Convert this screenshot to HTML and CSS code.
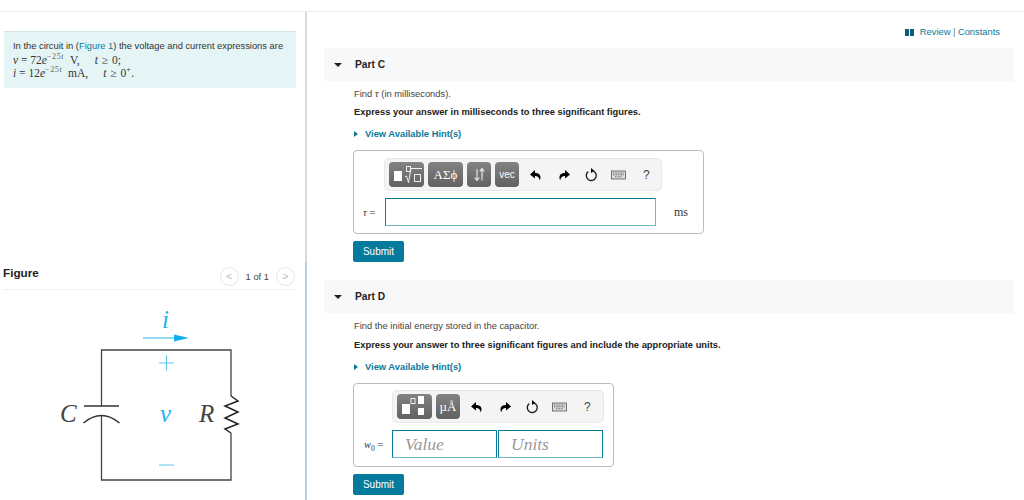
FILE: index.html
```html
<!DOCTYPE html>
<html lang="en">
<head>
  <meta charset="UTF-8" />
  <title>Part C and Part D</title>
  <link rel="stylesheet" href="styles.css">
</head>
<body>
  <svg class="defs" width="0" height="0">
    <symbol id="undo" viewBox="0 0 14 14"><path d="M6 2 L1 6.5 L6 10.5 V8 C8.5 8 10 9 10.8 12.5 C12.8 7.5 10.5 5 6 5 Z"/></symbol>
    <symbol id="redo" viewBox="0 0 14 14"><path d="M8 2 L13 6.5 L8 10.5 V8 C5.5 8 4 9 3.2 12.5 C1.2 7.5 3.5 5 8 5 Z"/></symbol>
    <symbol id="reset" viewBox="0 0 14 14"><path d="M4.2 3.6 A5 5 0 1 0 8 2.6" fill="none" stroke="#222" stroke-width="1.4"/><path d="M7 0 L10.2 2.7 L7 5 Z"/></symbol>
    <symbol id="keys" viewBox="0 0 15 10"><rect x="0.5" y="1" width="14" height="8" fill="#ddd" stroke="#555" stroke-width="0.8"/><path d="M2 3 H13 M2 4.8 H13 M4 6.8 H11" stroke="#666" stroke-width="1" stroke-dasharray="1 .6"/></symbol>
  </svg>

  <div class="main">
    <div class="left">
      <div class="intro">
        <div class="note">
          <div>In the circuit in (<a>Figure 1</a>) the voltage and current expressions are</div>
          <div class="math"><i>v</i> = 72<i>e</i><sup>&minus;25<i>t</i></sup> <span class="after-exp">V,</span><span class="gap"><i>t</i> &ge; 0;</span></div>
          <div class="math"><i>i</i> = 12<i>e</i><sup>&minus;25<i>t</i></sup> <span class="after-exp">mA,</span><span class="gap"><i>t</i> &ge; 0<sup class="plus">+</sup>.</span></div>
        </div>
      </div>
      <div class="figure">
        <div class="figure-head">
          <span class="figure-title">Figure</span>
          <div class="pager">
            <span class="page-btn">&lt;</span>
            <span class="page-count">1 of 1</span>
            <span class="page-btn">&gt;</span>
          </div>
        </div>
        <svg class="circuit" width="300" height="210" viewBox="0 0 300 210">
          <path d="M101.5 116 V60 H231 V106 M231 143 V190 H101.5 V126" fill="none" stroke="#444" stroke-width="1.3"/>
          <path d="M84 116 H119" stroke="#333" stroke-width="1.5"/>
          <path d="M83.5 133 Q101.5 118 119.5 133" fill="none" stroke="#333" stroke-width="1.5"/>
          <path d="M231 106 L238 111 L225 116 L238 122 L225 128 L238 134 L225 139 L231 143" fill="none" stroke="#222" stroke-width="1.5"/>
          <text class="letter dark" x="60" y="132">C</text>
          <text class="letter dark" x="199" y="132">R</text>
          <text class="letter cyan" x="160" y="132">v</text>
          <text class="letter cyan" x="162" y="38">i</text>
          <path d="M143 48 H176" stroke="#2bb6ec" stroke-width="1.2"/>
          <path d="M174 44.5 L189 48 L174 51.5 Z" fill="#12aeea"/>
          <path d="M159 73 H174 M166.5 65.5 V80.5 M159 175 H174" stroke="#5cc6ef" stroke-width="1.2"/>
        </svg>
      </div>
    </div>

    <div class="right">
      <div class="review">
        <span class="book"></span>
        <a>Review</a> <span class="sep">|</span> <a>Constants</a>
      </div>

      <div class="part-bar"><span class="caret"></span>Part C</div>
      <div class="part-body part-body-c">
        <p>Find <i class="serif">&tau;</i> (in milliseconds).</p>
        <p class="strong">Express your answer in milliseconds to three significant figures.</p>
        <p class="hint"><span class="hint-caret"></span>View Available Hint(s)</p>
        <div class="answer answer-c">
          <div class="toolbar">
            <span class="btn btn-wide">
              <svg width="35" height="25">
                <rect x="5" y="9" width="8" height="10" fill="#fff"/>
                <rect x="17.5" y="4.5" width="4" height="5" fill="none" stroke="#eee"/>
                <path d="M16 14.5 L17.5 14 L19.5 20.5 L22 6.5 H33" fill="none" stroke="#eee"/>
                <rect x="25.5" y="12.5" width="6" height="7" fill="none" stroke="#eee"/>
              </svg>
            </span>
            <span class="btn btn-sym">&Alpha;&Sigma;&#981;</span>
            <span class="btn btn-small">
              <svg width="24" height="25">
                <path d="M10 7 V18 M7.5 15.5 L10 18.5 L12.5 15.5 M15 18.5 V7 M12.8 9.5 L15 6.5 L17.2 9.5" fill="none" stroke="#eee" stroke-width="1.1"/>
              </svg>
            </span>
            <span class="btn btn-small vec">vec</span>
            <span class="tool first"><svg width="14" height="14"><use href="#undo"/></svg></span>
            <span class="tool"><svg width="14" height="14"><use href="#redo"/></svg></span>
            <span class="tool"><svg width="14" height="14"><use href="#reset"/></svg></span>
            <span class="tool"><svg width="15" height="10"><use href="#keys"/></svg></span>
            <span class="tool help">?</span>
          </div>
          <div class="row">
            <span class="var var-c"><i>&tau;</i> =</span>
            <span class="field field-c"></span>
            <span class="unit">ms</span>
          </div>
        </div>
        <div class="submit">Submit</div>
      </div>

      <div class="part-bar part-d"><span class="caret"></span>Part D</div>
      <div class="part-body part-body-d">
        <p>Find the initial energy stored in the capacitor.</p>
        <p class="strong">Express your answer to three significant figures and include the appropriate units.</p>
        <p class="hint"><span class="hint-caret"></span>View Available Hint(s)</p>
        <div class="answer answer-d">
          <div class="toolbar">
            <span class="btn btn-wide">
              <svg width="35" height="25">
                <rect x="5" y="10" width="8" height="10" fill="#fff"/>
                <rect x="14" y="4.5" width="4" height="5" fill="none" stroke="#eee"/>
                <rect x="21" y="2" width="6" height="8" fill="#fff"/>
                <rect x="21" y="14" width="6" height="7" fill="#fff"/>
              </svg>
            </span>
            <span class="btn btn-small units">&micro;&#8491;</span>
            <span class="tool first"><svg width="14" height="14"><use href="#undo"/></svg></span>
            <span class="tool"><svg width="14" height="14"><use href="#redo"/></svg></span>
            <span class="tool"><svg width="14" height="14"><use href="#reset"/></svg></span>
            <span class="tool"><svg width="15" height="10"><use href="#keys"/></svg></span>
            <span class="tool help">?</span>
          </div>
          <div class="row">
            <span class="var var-d"><i>w</i><sub>0</sub> =</span>
            <span class="field field-d">Value</span>
            <span class="field field-d">Units</span>
          </div>
        </div>
        <div class="submit submit-d">Submit</div>
      </div>
    </div>
  </div>
</body>
</html>
```

FILE: styles.css
```css
html, body {
  height: 500px;
  overflow: hidden;
}
body {
  margin: 0;
  padding-top: 11px;
  box-sizing: border-box;
  background: #fff;
  color: #333;
  font-family: "Liberation Sans", Arial, sans-serif;
  font-size: 9.35px;
}
.defs {
  position: absolute;
}
.main {
  display: flex;
  height: 489px;
  border-top: 1px solid #eee;
}

/* left column */
.left {
  width: 307px;
  flex: none;
  box-sizing: border-box;
}
.intro {
  height: 250px;
  padding-top: 19px;
  box-sizing: border-box;
  border-right: 2px solid #d5dade;
}
.note {
  width: 292px;
  height: 57px;
  margin-left: 4px;
  padding: 8px 0 0 9px;
  box-sizing: border-box;
  background: #e5f5f5;
  border-top: 1px solid #d5e4e6;
  line-height: 13.5px;
}
.note a {
  color: #0a7a9b;
}
.math {
  font-family: "Liberation Serif", serif;
  font-size: 11.5px;
  line-height: 13px;
  color: #333;
}
.math sup {
  font-size: 8px;
  line-height: 0;
  letter-spacing: 0.6px;
  color: #666;
}
.math sup.plus {
  color: #333;
}
.after-exp {
  margin-left: 3px;
}
.gap {
  margin-left: 15px;
  word-spacing: 1px;
}
.figure {
  height: 239px;
  border-right: 2px solid #b9d0e4;
}
.figure-head {
  display: flex;
  justify-content: space-between;
  align-items: center;
  height: 28px;
  margin: 0 10px 0 3px;
  border-bottom: 1px solid #f0f0f0;
  box-sizing: border-box;
}
.figure-title {
  margin-top: -6px;
  font-size: 11.7px;
  font-weight: bold;
  color: #222;
}
.pager {
  display: flex;
  align-items: center;
  gap: 7px;
  margin-top: 2px;
}
.page-btn {
  display: flex;
  align-items: center;
  justify-content: center;
  width: 17px;
  height: 17px;
  border: 1px solid #e6e6e6;
  border-radius: 50%;
  color: #bbb;
  font-size: 10px;
}
.page-count {
  color: #444;
}
.circuit {
  display: block;
}
.letter {
  font-family: "Liberation Serif", serif;
  font-style: italic;
  font-size: 25px;
}
.dark {
  fill: #444;
}
.cyan {
  fill: #20b2ea;
}

/* right column */
.right {
  flex: 1;
  min-width: 0;
}
.review {
  display: flex;
  justify-content: flex-end;
  align-items: center;
  gap: 2.5px;
  height: 12px;
  padding: 14px 24px 0 0;
  margin-bottom: 10px;
  color: #0a7a9b;
}
.book {
  width: 9px;
  height: 7px;
  margin-right: 3px;
  background: linear-gradient(90deg, #0b5f7d 45%, #fff 45%, #fff 55%, #0b5f7d 55%);
}
.sep {
  color: #777;
}
.part-bar {
  display: flex;
  align-items: center;
  width: 690px;
  height: 33px;
  margin-left: 17px;
  background: #f8f8f8;
  font-weight: bold;
  font-size: 10.2px;
  color: #222;
}
.part-d {
  margin-top: 18px;
}
.caret {
  width: 0;
  height: 0;
  margin: 0 13px 0 10px;
  border-left: 4px solid transparent;
  border-right: 4px solid transparent;
  border-top: 4.5px solid #222;
}
.part-body {
  margin-left: 46px;
  padding-top: 7px;
}
.part-body p {
  margin: 0 0 7px;
  padding-left: 1px;
  line-height: 12px;
  height: 12px;
  color: #444;
}
.part-body p.strong {
  margin-bottom: 10px;
  font-weight: bold;
  color: #222;
}
.part-body p.hint {
  display: flex;
  align-items: center;
  margin-bottom: 10px;
  font-weight: bold;
  color: #0a7a9b;
}
.part-body-c {
  padding-top: 6px;
}
.part-body-c p:first-child {
  margin-bottom: 7px;
}
.part-body-c p.strong {
  margin-bottom: 10px;
}
.part-body-c p.hint {
  margin-bottom: 10px;
}
.serif {
  font-family: "Liberation Serif", serif;
  font-size: 11px;
}
.hint-caret {
  width: 0;
  height: 0;
  margin-right: 7px;
  border-top: 3.5px solid transparent;
  border-bottom: 3.5px solid transparent;
  border-left: 4px solid #0a7a9b;
}
.answer {
  box-sizing: border-box;
  height: 84px;
  padding: 7px 0 0 30px;
  border: 1px solid #bbb;
  border-radius: 4px;
}
.answer-c {
  width: 351px;
}
.answer-d {
  width: 261px;
  padding: 6px 0 0 38px;
}
.toolbar {
  display: flex;
  align-items: center;
  gap: 4px;
  box-sizing: border-box;
  height: 33px;
  padding-left: 4px;
  background: #f4f4f4;
  border: 1px solid #e8e8e8;
  border-radius: 5px;
}
.answer-c .toolbar {
  width: 278px;
}
.answer-d .toolbar {
  width: 212px;
}
.btn {
  display: flex;
  align-items: center;
  justify-content: center;
  height: 25px;
  box-sizing: border-box;
  background: linear-gradient(#838383, #616161);
  border-radius: 4px;
  color: #fff;
}
.btn-wide {
  width: 35px;
}
.btn-sym {
  width: 35px;
  font-family: "Liberation Serif", serif;
  font-size: 13px;
}
.btn-small {
  width: 24px;
}
.vec {
  font-size: 10px;
}
.units {
  font-family: "Liberation Serif", serif;
  font-size: 13px;
}
.tool {
  display: flex;
  align-items: center;
  justify-content: center;
  width: 23.5px;
  color: #333;
  font-size: 12px;
}
.tool.first {
  margin-left: 1.5px;
}
.help {
  color: #444;
}
.row {
  display: flex;
  align-items: center;
  margin-top: 7px;
  height: 28px;
}
.var {
  font-family: "Liberation Serif", serif;
  font-size: 10.5px;
  color: #333;
}
.var-c {
  width: 22px;
  margin-left: -21px;
  flex: none;
}
.var-d {
  width: 28px;
  margin-left: -28px;
  flex: none;
}
.var sub {
  font-size: 7.5px;
  line-height: 0;
}
.field {
  display: block;
  box-sizing: border-box;
  height: 28px;
  border: 1px solid #0a7a9b;
  border-bottom-color: #6fb6c9;
  background: #fff;
}
.field-c {
  width: 271px;
  border-right-color: #6fb6c9;
}
.field-d {
  width: 105px;
  margin-right: 1px;
  padding: 3px 0 0 12px;
  font-family: "Liberation Serif", serif;
  font-style: italic;
  font-size: 17.5px;
  color: #999;
}
.unit {
  margin-left: 18px;
  font-family: "Liberation Serif", serif;
  font-size: 12px;
  color: #333;
}
.submit {
  display: flex;
  align-items: center;
  justify-content: center;
  width: 51px;
  height: 21px;
  margin-top: 7px;
  background: #047a9c;
  border-radius: 2px;
  color: #fff;
  font-size: 10px;
}
```
